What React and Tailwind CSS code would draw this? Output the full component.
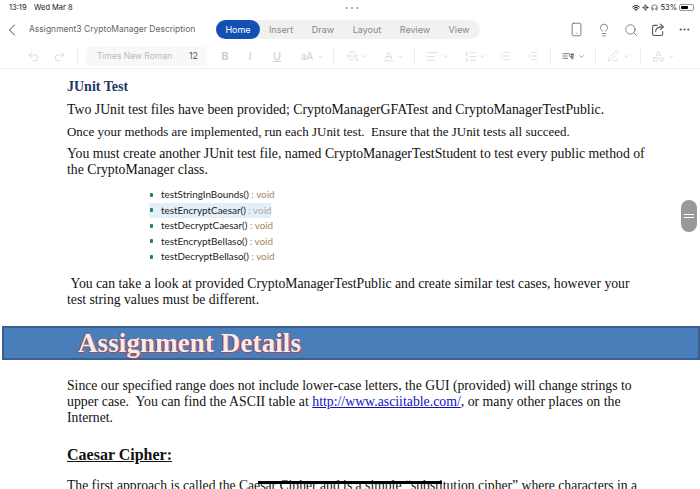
import React from 'react';
import { ChevronLeft, Smartphone, Lightbulb, Search, Ellipsis, Undo2, Redo2, ChevronDown, Wifi, Headphones, AlignLeft, ListOrdered, IndentDecrease, IndentIncrease, PenLine, Shapes, Baseline, PaintBucket, Pilcrow, LocateFixed } from 'lucide-react';

const tabs = [
  { name: 'Insert', width: 'w-[42px]' },
  { name: 'Draw', width: 'w-[42px]' },
  { name: 'Layout', width: 'w-[46px]' },
  { name: 'Review', width: 'w-[50px]' },
  { name: 'View', width: 'w-[38px]' },
];

const methods = ['testStringInBounds()', 'testEncryptCaesar()', 'testDecryptCaesar()', 'testEncryptBellaso()', 'testDecryptBellaso()'];

const Divider = ({ className }) => <div className={`h-[17px] w-px flex-none bg-[#ececec] ${className}`} />;
const Caret = ({ className }) => <ChevronDown size={7} strokeWidth={2} className={`flex-none text-[#c4c4c4] ${className}`} />;

const ShareIcon = () => (
  <svg width="14" height="14" viewBox="0 0 18 18" fill="none" stroke="currentColor" strokeWidth="1.4" strokeLinecap="round" strokeLinejoin="round">
    <path d="M8 3H4a2 2 0 0 0-2 2v9a2 2 0 0 0 2 2h9a2 2 0 0 0 2-2v-3" />
    <path d="M6 11c0-4 3-6 9-6" />
    <path d="M12 1.500l4 3.500-4 3.500" />
  </svg>
);

const Toolbar = () => (
  <div className="flex h-[25px] items-center border-b border-[#f1f1f1] pl-[27px] font-['Inter',sans-serif] text-[#cfcfcf]">
    <Undo2 size={13} strokeWidth={1.4} className="flex-none" />
    <Redo2 size={13} strokeWidth={1.4} className="ml-[13px] flex-none" />
    <Divider className="ml-[11px]" />
    <div className="ml-[8px] flex h-[19px] w-[121px] flex-none items-center rounded-[3px] bg-[#f8f8f8]">
      <span className="w-[94px] pl-[3px] text-center text-[8.5px] text-[#b9b9b9]">Times New Roman</span>
      <span className="w-[27px] text-center text-[9px] text-[#555]">12</span>
    </div>
    <span className="ml-[13px] w-[10px] text-center text-[11px] font-bold leading-none text-[#cdcdcd]">B</span>
    <span className="ml-[15px] w-[10px] text-center text-[11px] italic leading-none text-[#cdcdcd]">I</span>
    <span className="ml-[17px] w-[10px] text-center text-[11px] leading-none text-[#cdcdcd] underline">U</span>
    <span className="ml-[18px] w-[14px] text-center text-[10px] leading-none text-[#cdcdcd]">aA</span>
    <Caret className="ml-[3px]" />
    <Divider className="ml-[9px]" />
    <PaintBucket size={12} strokeWidth={1.3} className="ml-[13px] flex-none" />
    <Caret className="ml-px" />
    <Baseline size={13} strokeWidth={1.3} className="ml-[15px] flex-none" />
    <Caret className="ml-[2px]" />
    <Divider className="ml-[10px]" />
    <AlignLeft size={13} strokeWidth={1.3} className="ml-[11px] flex-none" />
    <Caret className="ml-[3px]" />
    <ListOrdered size={13} strokeWidth={1.3} className="ml-[15px] flex-none" />
    <Caret className="ml-[2px]" />
    <IndentDecrease size={12} strokeWidth={1.3} className="ml-[13px] flex-none" />
    <IndentIncrease size={12} strokeWidth={1.3} className="ml-[15px] flex-none" />
    <Divider className="ml-[12px]" />
    <div className="ml-[11px] flex w-[12px] flex-none items-center text-[#333]">
      <AlignLeft size={8} strokeWidth={2} className="flex-none" />
      <Pilcrow size={7} strokeWidth={2.4} className="-ml-[2px] flex-none" />
    </div>
    <ChevronDown size={7} strokeWidth={2} className="ml-[4px] flex-none text-[#555]" />
    <Divider className="ml-[10px]" />
    <PenLine size={12} strokeWidth={1.3} className="ml-[11px] flex-none" />
    <Caret className="ml-[4px]" />
    <Divider className="ml-[10px]" />
    <Shapes size={13} strokeWidth={1.3} className="ml-[11px] flex-none" />
    <Caret className="ml-[3px]" />
  </div>
);

const App = () => {
  return (
    <div className="relative h-[489px] w-[700px] overflow-hidden bg-white font-['Liberation_Serif',serif] text-[#111]">
      {/* iPad status bar */}
      <div className="flex h-[15px] items-center pl-[9px] pr-[6px] font-['Inter',sans-serif] text-[7.5px] text-[#222]">
        <span className="w-[25px]">13:19</span>
        <span>Wed Mar 8</span>
        <span className="ml-[273px] flex w-[12px] justify-between">
          <i className="size-[2px] rounded-full bg-[#999]" />
          <i className="size-[2px] rounded-full bg-[#999]" />
          <i className="size-[2px] rounded-full bg-[#999]" />
        </span>
        <div className="ml-auto flex items-center gap-[2px]">
          <Wifi size={8} strokeWidth={3} />
          <LocateFixed size={7} strokeWidth={2} />
          <Headphones size={7} strokeWidth={2} />
          <span>53%</span>
          <div className="flex h-[7px] w-[15px] rounded-[2px] border border-[#999] p-px">
            <div className="w-[7px] rounded-[1px] bg-black" />
          </div>
        </div>
      </div>

      {/* Title row */}
      <div className="flex h-[29px] items-center font-['Inter',sans-serif]">
        <ChevronLeft size={20} strokeWidth={1.2} className="ml-[2px] text-[#444]" />
        <span className="ml-[7px] w-[187px] text-[8.5px] text-[#666]">Assignment3 CryptoManager Description</span>
        <div className="flex h-[19px] items-center rounded-full bg-[#f1f1f1] text-[9px] text-[#888]">
          <span className="flex h-[19px] w-[44px] items-center justify-center rounded-full bg-[#1450b4] text-white">Home</span>
          {tabs.map((t) => (
            <span key={t.name} className={`text-center ${t.width}`}>{t.name}</span>
          ))}
          <span className="w-[2px]" />
        </div>
        <div className="ml-auto flex items-center gap-[13px] pr-[9px] text-[#555]">
          <Smartphone size={15} strokeWidth={1.2} />
          <Lightbulb size={14} strokeWidth={1.2} />
          <Search size={14} strokeWidth={1.2} />
          <ShareIcon />
          <Ellipsis size={13} strokeWidth={2} />
        </div>
      </div>

      <Toolbar />

      {/* Document */}
      <div className="pt-[10px] text-[13.7px] leading-[16px] whitespace-nowrap">
        <div className="px-[67px]">
          <h2 className="text-[14px] font-bold leading-[16px] text-[#1f3864]">JUnit Test</h2>
          <p className="mt-[7px] text-[13.8px]">Two JUnit test files have been provided; CryptoManagerGFATest and CryptoManagerTestPublic.</p>
          <p className="mt-[6px] whitespace-pre text-[12.95px]">Once your methods are implemented, run each JUnit test.  Ensure that the JUnit tests all succeed.</p>
          <p className="mt-[6px] text-[13.75px]">You must create another JUnit test file, named CryptoManagerTestStudent to test every public method of<br />the CryptoManager class.</p>

          <ul className="mt-[9px] ml-[82px] font-['Lato',sans-serif] text-[9.9px] leading-[15.5px]">
            {methods.map((m, i) => (
              <li key={m} className={`flex items-center pl-px ${i === 1 ? 'w-[122px] bg-[#e3eff9]' : 'w-[130px]'}`}>
                <span className="mr-[8px] h-[4px] w-[3px] flex-none rounded-[1px] bg-[#2f7d5c]" />
                <span className="text-[#222]">{m}</span>
                <span className={i === 1 ? 'text-[#aaa]' : 'text-[#a08a5f]'}>&nbsp;: void</span>
              </li>
            ))}
          </ul>

          <p className="mt-[11px]">&nbsp;You can take a look at provided CryptoManagerTestPublic and create similar test cases, however your<br />test string values must be different.</p>
        </div>

        {/* Section banner */}
        <div className="mt-[18.5px] ml-[2px] flex h-[34px] items-center border-2 border-[#3d5f8f] bg-[#4a7ebb] pl-[74px]">
          <span className="text-[27px] font-bold leading-none tracking-[0.1px] text-[#f6ecec] [text-shadow:1px_1px_0_#a8484c,-1px_0_0_#a8484c]">Assignment Details</span>
        </div>

        <div className="px-[67px]">
          <p className="mt-[18px] whitespace-pre">
            Since our specified range does not include lower-case letters, the GUI (provided) will change strings to
            <br />
            <span className="text-[13.8px]">upper case.  You can find the ASCII table at <a className="text-[#1010c0] underline">http://www.asciitable.com/</a>, or many other places on the</span>
            <br />
            Internet.
          </p>
          <h3 className="mt-[20px] text-[16px] font-bold leading-[18px] underline">Caesar Cipher:</h3>
          <p className="mt-[14px] text-[13.65px]">The first approach is called the Caesar Cipher and is a simple “substitution cipher” where characters in a</p>
        </div>
      </div>

      {/* Stray black bar lying over the last line */}
      <div className="absolute left-[258px] top-[481px] h-[3px] w-[184px] bg-black" />

      {/* Scroll handle */}
      <div className="absolute left-[681px] top-[200px] flex h-[32px] w-[16px] flex-col items-center justify-center gap-[2px] rounded-full bg-[#999]">
        <i className="h-px w-[10px] bg-white" />
        <i className="h-px w-[10px] bg-white" />
      </div>
    </div>
  );
};

export default App;
